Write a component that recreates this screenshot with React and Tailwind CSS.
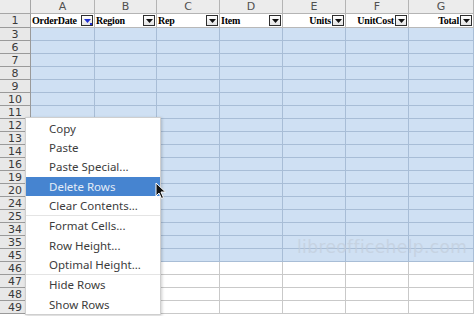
import React from 'react';

const cols = ['A', 'B', 'C', 'D', 'E', 'F', 'G'];
const heads = [
  { t: 'OrderDate', right: false, filtered: true },
  { t: 'Region', right: false },
  { t: 'Rep', right: false },
  { t: 'Item', right: false },
  { t: 'Units', right: true },
  { t: 'UnitCost', right: true },
  { t: 'Total', right: true },
];
const rows = [3, 6, 7, 8, 9, 10, 11, 12, 13, 14, 16, 19, 20, 24, 25, 34, 35, 45, 46, 47, 48, 49];

const menu = [
  'Copy', 'Paste', 'Paste Special...', 'Delete Rows', 'Clear Contents...', '-',
  'Format Cells...', 'Row Height...', 'Optimal Height...', '-', 'Hide Rows', 'Show Rows',
];

function FilterButton({ filtered }) {
  return (
    <div className="w-[12px] h-[11px] border border-[#2e2e2e] bg-gradient-to-b from-white to-[#e4e4e4] flex items-center justify-center relative shrink-0">
      <svg width="7" height="4" viewBox="0 0 7 4">
        <path d="M0 0H7L3.5 4Z" fill={filtered ? '#1f2fd0' : '#111'} />
      </svg>
      {filtered && <div className="absolute right-[0px] bottom-[0px] w-[2px] h-[2px] bg-[#1f2fd0]" />}
    </div>
  );
}

export default function App() {
  return (
    <div className="relative w-[474px] h-[316px] overflow-hidden bg-white font-['DejaVu_Sans',sans-serif]">
      <div className="grid grid-cols-[31px_64px_62px_63px_63px_63px_63px_65px]">
        {/* column header */}
        <div className="h-[14px] bg-[#ececec] border-r border-b border-[#a6a6a6]" />
        {cols.map((c) => (
          <div key={c} className="h-[14px] bg-[#ececec] border-r border-b border-[#b4b4b4] flex items-center justify-center text-[11px] text-[#505050] leading-none">
            {c}
          </div>
        ))}

        {/* row 1 */}
        <div className="h-[14px] bg-[#e8e8e8] border-r border-b border-[#9a9a9a] flex items-center justify-center text-[11px] text-[#3a3a3a] leading-none">1</div>
        {heads.map((h, i) => (
          <div key={i} className="h-[14px] bg-white border-r border-b border-[#b8b8b8] flex items-end pb-[1px] pl-[1px] pr-[1px] gap-[1px]">
            <span className={`flex-1 font-['Liberation_Serif',serif] font-bold text-[10px] leading-[11px] tracking-[-0.2px] text-black whitespace-nowrap ${h.right ? 'text-right' : 'text-left'}`}>
              {h.t}
            </span>
            <FilterButton filtered={h.filtered} />
          </div>
        ))}

        {/* data rows */}
        {rows.map((r) => {
          const sel = r <= 45;
          return (
            <React.Fragment key={r}>
              <div className="h-[13px] bg-[#e8e8e8] border-r border-b border-[#9a9a9a] flex items-center justify-center text-[11px] text-[#3a3a3a] leading-none">
                {r}
              </div>
              {cols.map((c) => (
                <div
                  key={c}
                  className={`h-[13px] border-r border-b ${sel ? 'bg-[#cfe0f3] border-[#a8bdd6]' : 'bg-white border-[#c9c9c9]'}`}
                />
              ))}
            </React.Fragment>
          );
        })}
      </div>

      {/* watermark */}
      <div className="absolute left-[297px] top-[235px] text-[17px] text-[#c3cedc] opacity-70 font-['DejaVu_Sans',sans-serif] tracking-[0.4px]">
        libreofficehelp.com
      </div>

      {/* context menu */}
      <div className="absolute left-[25px] top-[117px] w-[136px] bg-white border border-[#cfcfcf] shadow-[1px_1px_3px_rgba(0,0,0,0.2)] pt-[1px] font-['Noto_Sans',sans-serif]">
        {menu.map((m, i) =>
          m === '-' ? (
            <div key={i} className="h-[1px] bg-[#e4e4e4]" />
          ) : (
            <div
              key={i}
              className={`h-[19.3px] flex items-center pl-[23px] text-[11.5px] leading-none ${m === 'Delete Rows' ? 'bg-[#4684d0] text-[#e4ecf7]' : 'text-[#3c3c3c]'}`}
            >
              {m}
            </div>
          )
        )}
      </div>

      {/* mouse cursor */}
      <svg className="absolute left-[155px] top-[182px]" width="12" height="18" viewBox="0 0 12 18">
        <path d="M1 1V14L4 11L6.5 16.5L8.5 15.5L6 10H10.5Z" fill="#111" stroke="#fff" strokeWidth="1" strokeLinejoin="round" />
      </svg>
    </div>
  );
}
